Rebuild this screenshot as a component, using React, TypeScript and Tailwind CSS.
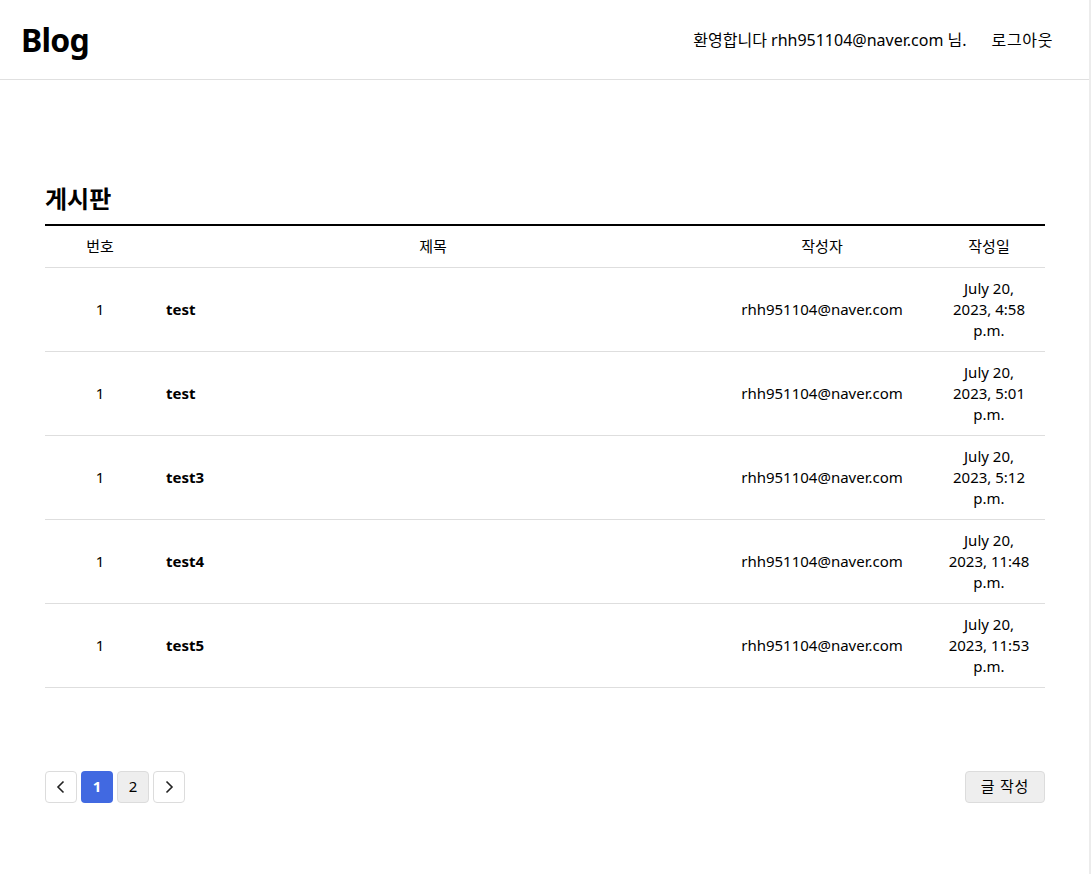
import React from "react";

const rows = [
  { no: 1, title: "test", author: "rhh951104@naver.com", date: "July 20, 2023, 4:58 p.m." },
  { no: 1, title: "test", author: "rhh951104@naver.com", date: "July 20, 2023, 5:01 p.m." },
  { no: 1, title: "test3", author: "rhh951104@naver.com", date: "July 20, 2023, 5:12 p.m." },
  { no: 1, title: "test4", author: "rhh951104@naver.com", date: "July 20, 2023, 11:48 p.m." },
  { no: 1, title: "test5", author: "rhh951104@naver.com", date: "July 20, 2023, 11:53 p.m." },
];

export default function App() {
  return (
    <div
      className="flex min-h-[874px] w-full bg-white text-black"
      style={{ fontFamily: '"Noto Sans", "Noto Sans CJK KR", sans-serif' }}
    >
      <div className="flex-1 min-w-0">
        <header className="flex h-[80px] items-center justify-between border-b border-[#e0e0e0] pl-[21px] pr-[36px]">
          <h1 className="text-[32px] font-bold leading-none tracking-tight">Blog</h1>
          <div className="flex items-center gap-[25px] text-[16px]">
            <span>환영합니다 rhh951104@naver.com 님.</span>
            <span className="tracking-[0.04em]">로그아웃</span>
          </div>
        </header>
        <main className="mx-[45px] w-[1000px] pt-[102px]">
          <h2 className="mb-[8px] text-[24px] font-bold leading-[34px]">게시판</h2>
          <table className="w-full border-collapse border-t-2 border-black text-[15px]">
            <thead>
              <tr className="h-[42px] border-b border-[#dedede]">
                <th className="w-[110px] font-normal">번호</th>
                <th className="w-[556px] font-normal">제목</th>
                <th className="w-[222px] font-normal">작성자</th>
                <th className="w-[112px] font-normal">작성일</th>
              </tr>
            </thead>
            <tbody>
              {rows.map((r, i) => (
                <tr key={i} className="h-[84px] border-b border-[#dedede]">
                  <td className="text-center">{r.no}</td>
                  <td className="px-[11px] font-bold">{r.title}</td>
                  <td className="text-center">{r.author}</td>
                  <td className="px-[12px] text-center leading-[21px]">{r.date}</td>
                </tr>
              ))}
            </tbody>
          </table>
          <div className="mt-[83px] flex items-center justify-between">
            <div className="flex gap-[4px]">
              <button className="flex h-[32px] w-[32px] items-center justify-center rounded border border-[#dcdcdc] bg-white">
                <svg width="16" height="16" viewBox="0 0 16 16" fill="none" stroke="#222" strokeWidth="1.6">
                  <path d="M10.5 2.5 5 8l5.5 5.5" />
                </svg>
              </button>
              <button className="flex h-[32px] w-[32px] items-center justify-center rounded bg-[#4169e1] text-[15px] font-bold text-white">
                1
              </button>
              <button className="flex h-[32px] w-[32px] items-center justify-center rounded border border-[#dcdcdc] bg-[#eeeeee] text-[15px]">
                2
              </button>
              <button className="flex h-[32px] w-[32px] items-center justify-center rounded border border-[#dcdcdc] bg-white">
                <svg width="16" height="16" viewBox="0 0 16 16" fill="none" stroke="#222" strokeWidth="1.6">
                  <path d="M5.5 2.5 11 8l-5.5 5.5" />
                </svg>
              </button>
            </div>
            <button className="h-[32px] w-[80px] rounded border border-[#dcdcdc] bg-[#eeeeee] text-[15px] tracking-wider">
              글 작성
            </button>
          </div>
        </main>
      </div>
      <div className="w-[2px] bg-[#ececec]" />
    </div>
  );
}
